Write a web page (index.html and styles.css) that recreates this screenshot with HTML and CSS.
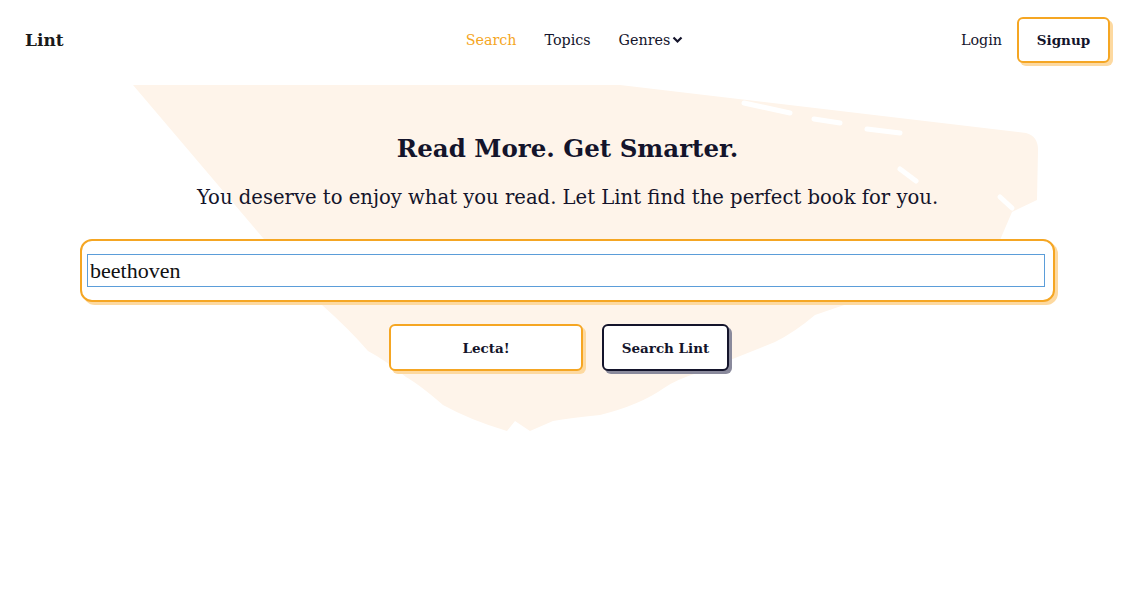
FILE: index.html
```html
<!DOCTYPE html>
<html lang="en">
<head>
    <meta charset="UTF-8">
    <title>Lint</title>
    <link rel="stylesheet" href="styles.css">
</head>
<body>
    <svg class="blob" width="1145" height="600" viewBox="0 0 1145 600" aria-hidden="true">
        <path fill="#fef4ea" d="M133,85 L620,85 L1026,133 Q1038,136 1038,150 L1037,200 L1012,212 L1000,240 L990,270 L850,303 L815,315 Q795,332 775,342 L700,372 Q675,380 664,388 Q640,405 600,415 Q570,418 553,421 L530,431 L515,421 L507,431 Q470,420 443,405 Q420,385 406,377 Q385,360 368,351 Q350,330 322,305 L263,238 Z"/>
        <g stroke="#fff" stroke-width="5" stroke-linecap="round">
            <line x1="744" y1="103" x2="790" y2="113"/>
            <line x1="814" y1="119" x2="840" y2="123"/>
            <line x1="867" y1="129" x2="900" y2="133"/>
            <line x1="900" y1="169" x2="916" y2="181"/>
            <line x1="1000" y1="197" x2="1012" y2="208"/>
        </g>
    </svg>

    <div class="header">
        <div class="logo">Lint</div>
        <div class="nav">
            <a href="#" class="active">Search</a>
            <a href="#">Topics</a>
            <a href="#" class="genres">Genres
                <svg width="11" height="8" viewBox="0 0 11 8"><path d="M1.5 1.5 L5.5 5.5 L9.5 1.5" fill="none" stroke="#14142b" stroke-width="2.2"/></svg>
            </a>
        </div>
        <div class="account">
            <a href="#" class="login">Login</a>
            <button class="btn btn-signup">Signup</button>
        </div>
    </div>

    <div class="hero">
        <h1>Read More. Get Smarter.</h1>
        <p class="lead">You deserve to enjoy what you read. Let Lint find the perfect book for you.</p>
        <div class="search-box">
            <input type="text" class="search-input" value="beethoven" autofocus>
        </div>
        <div class="actions">
            <button class="btn btn-lecta">Lecta!</button>
            <button class="btn btn-search">Search Lint</button>
        </div>
    </div>
</body>
</html>
```

FILE: styles.css
```css
body {
    margin: 0;
    background: #fff;
    color: #14142b;
    font-family: 'DejaVu Serif', 'Liberation Serif', serif;
    position: relative;
    min-height: 600px;
}
.blob {
    position: absolute;
    top: 0;
    left: 0;
    z-index: 0;
}
.header,
.hero {
    position: relative;
    z-index: 1;
}
.header {
    display: grid;
    grid-template-columns: 1fr auto 1fr;
    align-items: center;
    height: 80px;
    padding: 0 35px 0 25px;
}
.logo {
    font-size: 17px;
    font-weight: 700;
    color: #1a1a1a;
}
.nav {
    display: flex;
    align-items: center;
    gap: 28px;
    font-size: 14.3px;
    margin-left: 14px;
}
.nav a,
.account a {
    color: #14142b;
    text-decoration: none;
}
.nav a.active {
    color: #f5a623;
}
.genres {
    display: flex;
    align-items: center;
    gap: 2px;
}
.account {
    display: flex;
    align-items: center;
    justify-content: flex-end;
    gap: 15px;
    font-size: 14.3px;
}
.btn {
    font-family: inherit;
    font-weight: 700;
    font-size: 13.5px;
    color: #14142b;
    background: #fff;
    border-radius: 6px;
    cursor: pointer;
}
.btn-signup {
    width: 93px;
    height: 46px;
    border: 2px solid #f5a623;
    box-shadow: 3px 3px 0 #fdd9a0;
}
.hero {
    padding: 49px 90px 0 80px;
    text-align: center;
}
.hero h1 {
    margin: 0;
    font-size: 24.5px;
    line-height: 40px;
}
.lead {
    margin: 14px 0 0;
    font-size: 19.6px;
    line-height: 30px;
}
.search-box {
    margin-top: 26px;
    height: 59px;
    border: 2px solid #f5a623;
    border-radius: 12px;
    box-shadow: 3px 3px 0 #fdd9a0;
    background: #fff;
    display: flex;
    align-items: center;
    padding: 0 8px 0 5px;
}
.search-input {
    width: 100%;
    height: 33px;
    box-sizing: border-box;
    border: 1px solid #5b9dd9;
    outline: none;
    padding: 0 2px;
    font-family: 'Liberation Serif', 'DejaVu Serif', serif;
    font-size: 22px;
    color: #111;
    caret-color: #111;
}
.actions {
    display: flex;
    justify-content: center;
    gap: 19px;
    margin-top: 22px;
    padding-right: 17px;
}
.btn-lecta {
    width: 194px;
    height: 47px;
    border: 2px solid #f5a623;
    box-shadow: 3px 3px 0 #fdd9a0;
}
.btn-search {
    width: 127px;
    height: 47px;
    border: 2px solid #14142b;
    box-shadow: 3px 3px 0 #8a8a9c;
}
```
